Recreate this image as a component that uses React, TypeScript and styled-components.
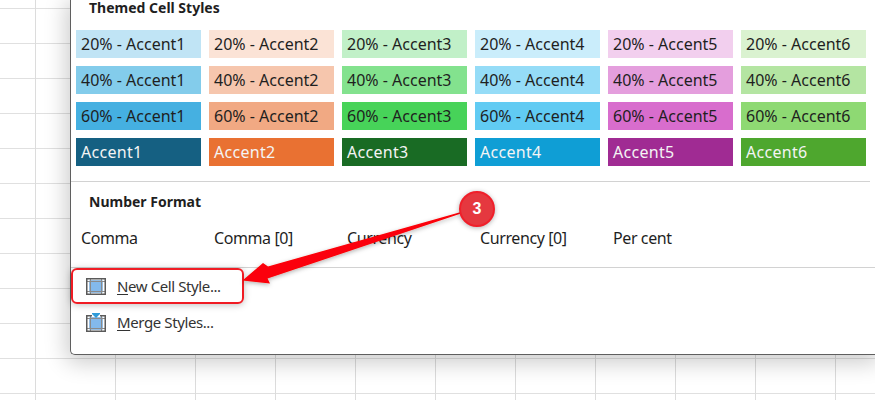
import React from "react";
import styled, { createGlobalStyle } from "styled-components";

const Global = createGlobalStyle`
  html, body { margin: 0; padding: 0; background: #fff; }
  body { font-family: "Noto Sans", "Liberation Sans", sans-serif; }
`;

const Sheet = styled.div`
  position: relative;
  width: 875px;
  height: 400px;
  overflow: hidden;
  background-color: #fff;
  background-image:
    linear-gradient(to right, #dcdcdc 1px, transparent 1px),
    linear-gradient(to bottom, #e0e0e0 1px, transparent 1px);
  background-size: 80px 35px;
  background-position: 35px 8px;
`;

const Menu = styled.div`
  position: absolute;
  left: 70px;
  top: 0;
  right: 0;
  height: 355px;
  box-sizing: border-box;
  background: #fff;
  border-left: 1px solid #5f5f5f;
  border-bottom: 1px solid #5f5f5f;
  border-bottom-left-radius: 5px;
  box-shadow: 0 4px 22px 4px rgba(0, 0, 0, 0.2);
  display: flex;
  flex-direction: column;
`;

const Heading = styled.div`
  font-size: 14px;
  font-weight: 700;
  line-height: 16px;
  color: #1f1f1f;
  padding-left: 18px;
`;

const ThemedSection = styled.section`
  height: 181px;
  flex: none;
`;

const SwatchGrid = styled.div`
  display: grid;
  grid-template-columns: repeat(6, 125px);
  grid-auto-rows: 28px;
  gap: 8px;
  margin: 14px 0 0 5px;
`;

const Swatch = styled.div<{ $bg: string; $light?: boolean }>`
  background: ${(p) => p.$bg};
  color: ${(p) => (p.$light ? "#f4f4f4" : "#1f1f1f")};
  font-size: 16px;
  line-height: 28px;
  padding-left: 5px;
  white-space: nowrap;
  letter-spacing: ${(p) => (p.$light ? "0.3px" : "0")};
`;

const Divider = styled.div<{ $inset?: boolean }>`
  height: 1px;
  flex: none;
  background: #d2d2d2;
  margin-right: ${(p) => (p.$inset ? "5px" : "0")};
`;

const NumberSection = styled.section`
  height: 85px;
  flex: none;
  box-sizing: border-box;
  padding-top: 12px;
`;

const FormatRow = styled.div`
  display: grid;
  grid-template-columns: repeat(5, 133px);
  margin: 18px 0 0 5px;
`;

const FormatCell = styled.div`
  font-size: 16px;
  line-height: 20px;
  padding-left: 5px;
  color: #1f1f1f;
  letter-spacing: -0.4px;
`;

const Actions = styled.div`
  display: flex;
  flex-direction: column;
`;

const ActionRow = styled.div<{ $highlighted?: boolean }>`
  position: relative;
  height: 36px;
  display: flex;
  align-items: center;
  gap: 11px;
  padding-left: 15px;
  font-size: 15px;
  color: #333;
  letter-spacing: -0.4px;
  ${(p) =>
    p.$highlighted &&
    `
    width: 173px;
    border: 2px solid #f01c24;
    border-radius: 6px;
    box-sizing: border-box;
    padding-left: 13px;
    box-shadow: 0 1px 7px rgba(0,0,0,0.25);
  `}
`;

const Mnemonic = styled.span`
  text-decoration: underline;
  text-underline-offset: 2px;
`;

const Overlay = styled.svg`
  position: absolute;
  left: 0;
  top: 0;
  pointer-events: none;
`;

const Badge = styled.div`
  position: absolute;
  left: 459px;
  top: 191px;
  width: 36px;
  height: 36px;
  box-sizing: border-box;
  border-radius: 50%;
  background: #e5383f;
  border: 2px solid #f01f2a;
  box-shadow: 0 1px 5px rgba(0, 0, 0, 0.3);
  color: #fff;
  font: 700 16px/32px "Liberation Sans", sans-serif;
  text-align: center;
`;

const rows: { label: string; colors: string[]; light?: boolean }[] = [
  { label: "20% - Accent", colors: ["#c0e4f5", "#fbe3d6", "#c1f0c8", "#caedfb", "#f2cfee", "#daf2d0"] },
  { label: "40% - Accent", colors: ["#83cceb", "#f6c6ad", "#83e28e", "#95dcf7", "#e49edd", "#b4e5a2"] },
  { label: "60% - Accent", colors: ["#45b0e1", "#f1a983", "#47d359", "#61cbf3", "#d86dcd", "#8ed973"] },
  { label: "Accent", colors: ["#156082", "#e97132", "#196b24", "#0f9ed5", "#a02b93", "#4ea72e"], light: true },
];

const formats = ["Comma", "Comma [0]", "Currency", "Currency [0]", "Per cent"];

const NewStyleIcon = () => (
  <svg width="20" height="17" viewBox="0 0 20 17">
    <rect x="4" y="3" width="12" height="11" fill="#83b9ec" stroke="#2f7cc6" />
    <path d="M0.75 3.5H19.25M0.75 13.5H19.25M4.5 0.75V16.25M15.5 0.75V16.25" stroke="#8a8a8a" strokeWidth="1" fill="none" />
    <rect x="0.75" y="0.75" width="18.5" height="15.5" fill="none" stroke="#5a5a5a" strokeWidth="1.5" />
  </svg>
);

const MergeIcon = () => (
  <svg width="20" height="19" viewBox="0 0 20 19">
    <rect x="4" y="5" width="12" height="11" fill="#83b9ec" stroke="#2f7cc6" />
    <path d="M0.75 5.5H19.25M0.75 15.5H19.25M4.5 2.75V18.25M15.5 2.75V18.25" stroke="#8a8a8a" strokeWidth="1" fill="none" />
    <path d="M6 2.75H0.75V18.25H19.25V2.75H14" fill="none" stroke="#5a5a5a" strokeWidth="1.5" />
    <path d="M6 0H14V1L10 5L6 1Z" fill="#2e9bd9" />
  </svg>
);

export default function App() {
  return (
    <Sheet>
      <Global />
      <Menu>
        <ThemedSection>
          <Heading>Themed Cell Styles</Heading>
          <SwatchGrid>
            {rows.map((row) =>
              row.colors.map((c, i) => (
                <Swatch key={row.label + i} $bg={c} $light={row.light}>
                  {row.label}
                  {i + 1}
                </Swatch>
              ))
            )}
          </SwatchGrid>
        </ThemedSection>
        <Divider $inset />
        <NumberSection>
          <Heading>Number Format</Heading>
          <FormatRow>
            {formats.map((f) => (
              <FormatCell key={f}>{f}</FormatCell>
            ))}
          </FormatRow>
        </NumberSection>
        <Divider />
        <Actions>
          <ActionRow $highlighted>
            <NewStyleIcon />
            <span>
              <Mnemonic>N</Mnemonic>ew Cell Style...
            </span>
          </ActionRow>
          <ActionRow>
            <MergeIcon />
            <span>
              <Mnemonic>M</Mnemonic>erge Styles...
            </span>
          </ActionRow>
        </Actions>
      </Menu>
      <Overlay width="875" height="400" viewBox="0 0 875 400">
        <defs>
          <filter id="arrowShadow" x="-10%" y="-30%" width="120%" height="160%">
            <feDropShadow dx="0" dy="1.5" stdDeviation="2" floodColor="#000" floodOpacity="0.3" />
          </filter>
        </defs>
        <path
          d="M461 212L268 266.5L263 263L242.5 280.5L270 283.5L267.5 278.5L461 213.5Z"
          fill="#fb0007"
          filter="url(#arrowShadow)"
        />
      </Overlay>
      <Badge>3</Badge>
    </Sheet>
  );
}
